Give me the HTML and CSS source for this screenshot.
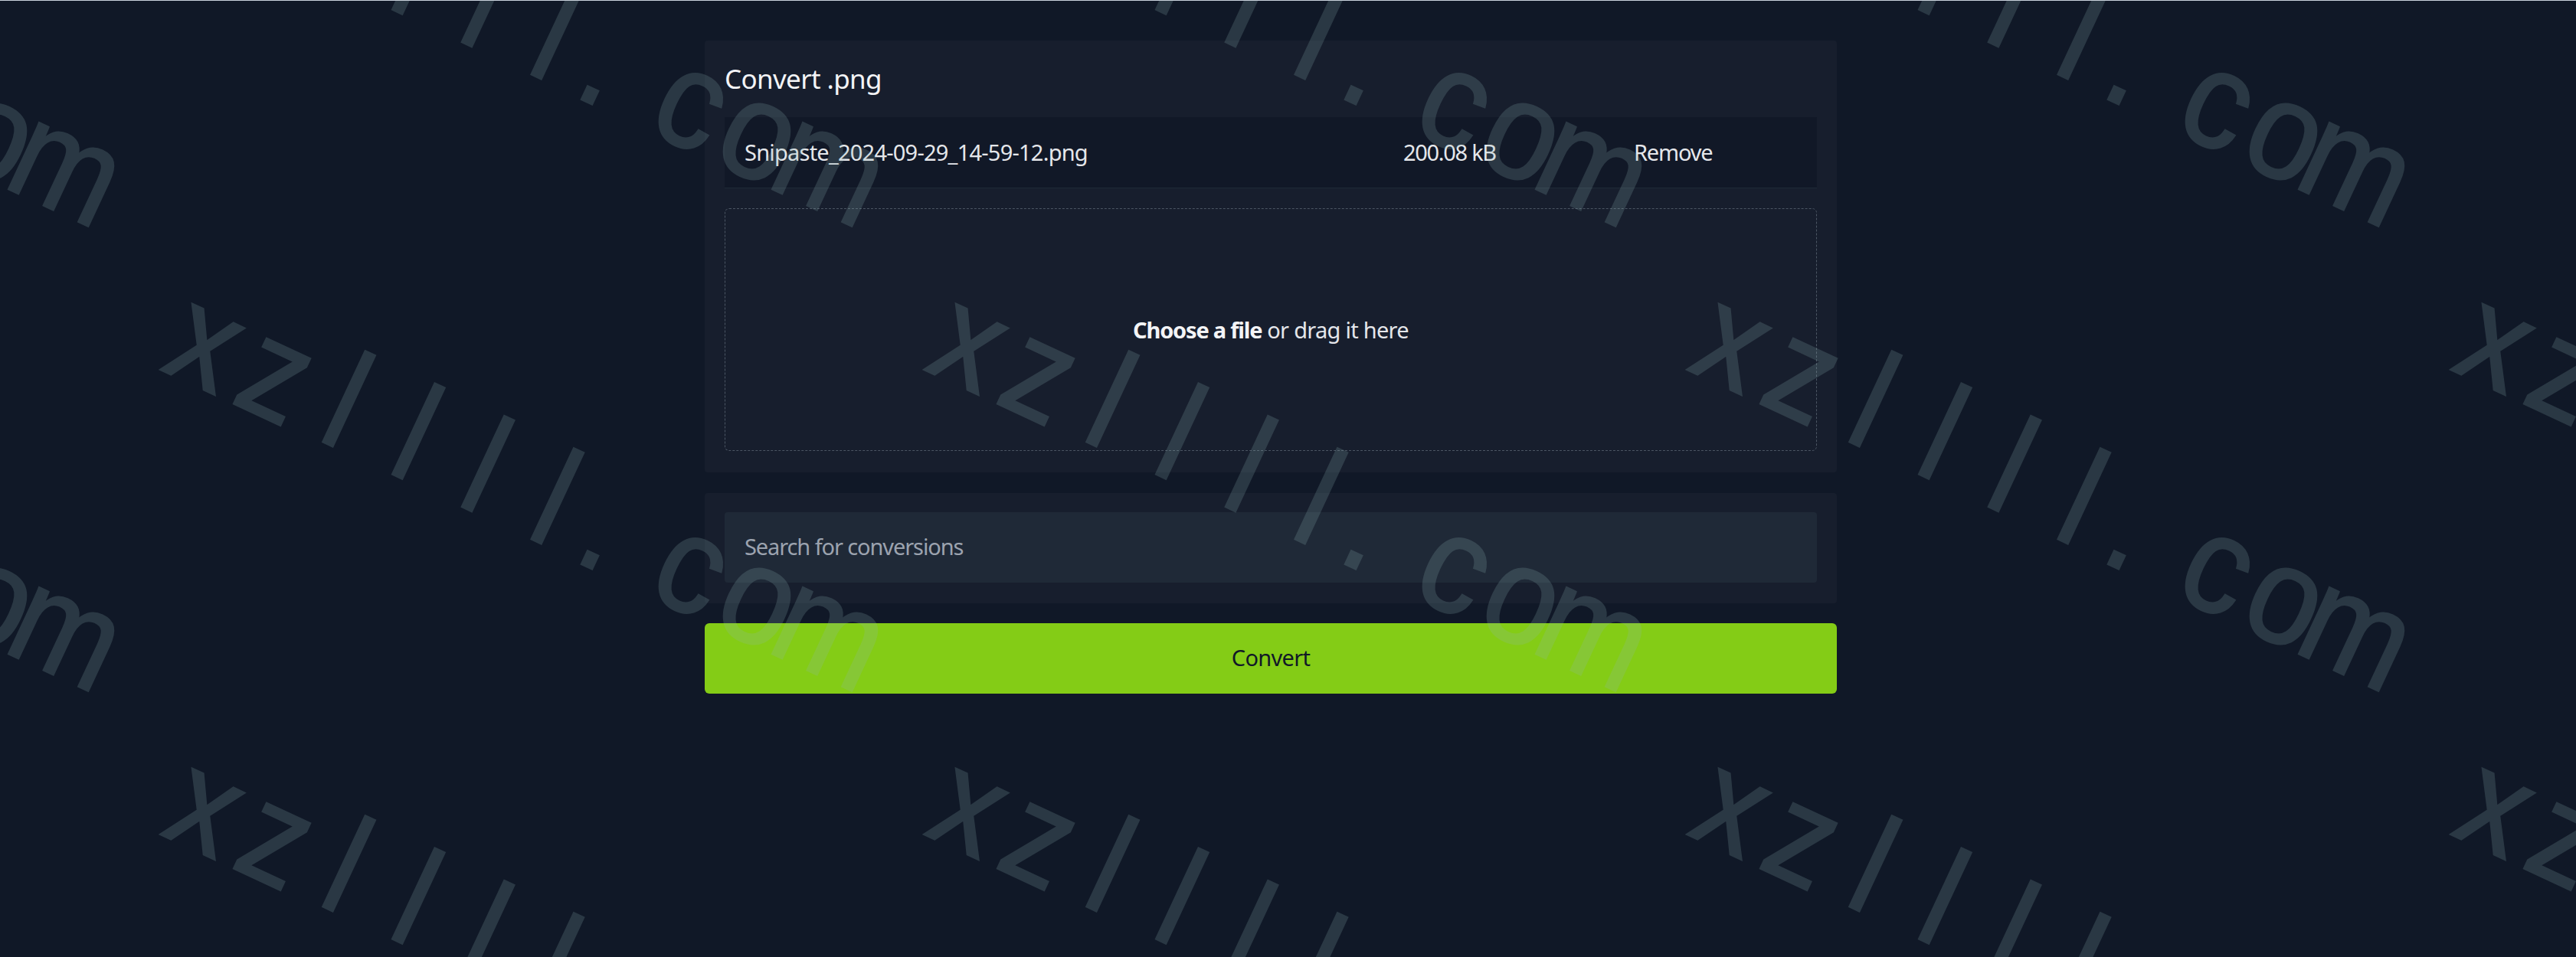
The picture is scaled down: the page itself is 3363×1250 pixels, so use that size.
FILE: index.html
```html
<!DOCTYPE html>
<html lang="en">
<head>
<meta charset="utf-8">
<title>Convert .png</title>
<link rel="stylesheet" href="styles.css">
</head>
<body>
<main class="page">
  <section class="panel panel-files">
    <h1 class="title">Convert .png</h1>
    <div class="file-row">
      <span class="cell cell-name">Snipaste_2024-09-29_14-59-12.png</span>
      <span class="cell cell-size">200.08 kB</span>
      <span class="cell cell-action">Remove</span>
    </div>
    <div class="dropzone"><span><strong>Choose a file</strong> or drag it here</span></div>
  </section>
  <section class="panel panel-search">
    <input class="search" type="text" placeholder="Search for conversions">
  </section>
  <button class="convert" type="button"><span class="convert-label">Convert</span></button>
</main>
<svg class="watermark" width="3363" height="1250" viewBox="0 0 3363 1250" aria-hidden="true">
  <defs>
    <text id="wm" class="wm-text" transform="rotate(25) scale(0.91 1)" y="47 47 43 43 43 43 45 46 46 46" x="4 115 224 334 444 554 635 773 880 992">xzllll.com</text>
  </defs>
  <use href="#wm" x="-736" y="-152"/><use href="#wm" x="261" y="-152"/><use href="#wm" x="1258" y="-152"/><use href="#wm" x="2254" y="-152"/>
  <use href="#wm" x="-736" y="455"/><use href="#wm" x="261" y="455"/><use href="#wm" x="1258" y="455"/><use href="#wm" x="2254" y="455"/><use href="#wm" x="3251" y="455"/>
  <use href="#wm" x="-736" y="1062"/><use href="#wm" x="261" y="1062"/><use href="#wm" x="1258" y="1062"/><use href="#wm" x="2254" y="1062"/><use href="#wm" x="3251" y="1062"/>
</svg>
</body>
</html>
```
FILE: styles.css
```css
* { box-sizing: border-box; }
html, body { margin: 0; height: 100%; }
body {
  background: #101827;
  border-top: 1px solid #c9d2dc;
  color: #e5e7eb;
  font-family: "Noto Sans", "Open Sans", sans-serif;
  font-size: 29px;
  letter-spacing: -0.72px;
  overflow: hidden;
  position: relative;
}
.page {
  display: flex;
  flex-direction: column;
  width: 1478px;
  margin-left: 920px;
  padding-top: 52px;
}
.panel { background: #171e2d; border-radius: 4px; padding: 25px 26px; }
.panel-files { height: 564px; }
.panel-search { height: 144px; margin-top: 27px; }
.title { margin: 0 0 25px; font-size: 35px; font-weight: 400; letter-spacing: -0.65px; line-height: 50px; color: #f3f4f6; }
.file-row {
  display: grid;
  grid-template-columns: 860px 301px 1fr;
  align-items: center;
  height: 93px;
  padding-bottom: 2px;
  background: #111827;
  border-bottom: 1px solid #1f2937;
}
.cell { padding-left: 26px; white-space: nowrap; }
.cell-name { letter-spacing: -0.78px; }
.cell-size { letter-spacing: -1.3px; }
.cell-action { letter-spacing: -1.2px; }
.dropzone {
  display: flex;
  align-items: center;
  justify-content: center;
  height: 317px;
  margin-top: 26px;
  border: 1px dashed #4b5563;
  border-radius: 6px;
}
.dropzone strong { font-weight: 700; letter-spacing: -1.2px; color: #f3f4f6; }
.search {
  display: block;
  width: 100%;
  height: 92px;
  padding: 0 26px 3px;
  border: 0;
  border-radius: 4px;
  background: #1f2937;
  color: #e5e7eb;
  font: inherit;
  letter-spacing: -1.1px;
}
.search::placeholder { color: #9ca3af; opacity: 1; }
.convert {
  height: 92px;
  margin-top: 26px;
  padding: 0 0 3px;
  border: 0;
  border-radius: 6px;
  background: #84cc16;
  color: #111827;
  font: inherit;
  letter-spacing: inherit;
}
.watermark { position: absolute; left: 0; top: -1px; pointer-events: none; }
.wm-text {
  font-family: "Liberation Sans", sans-serif;
  font-size: 181px;
  text-anchor: middle;
  fill: #92b8b8;
  stroke: #92b8b8;
  stroke-width: 2.5px;
  opacity: 0.2;
}
```
